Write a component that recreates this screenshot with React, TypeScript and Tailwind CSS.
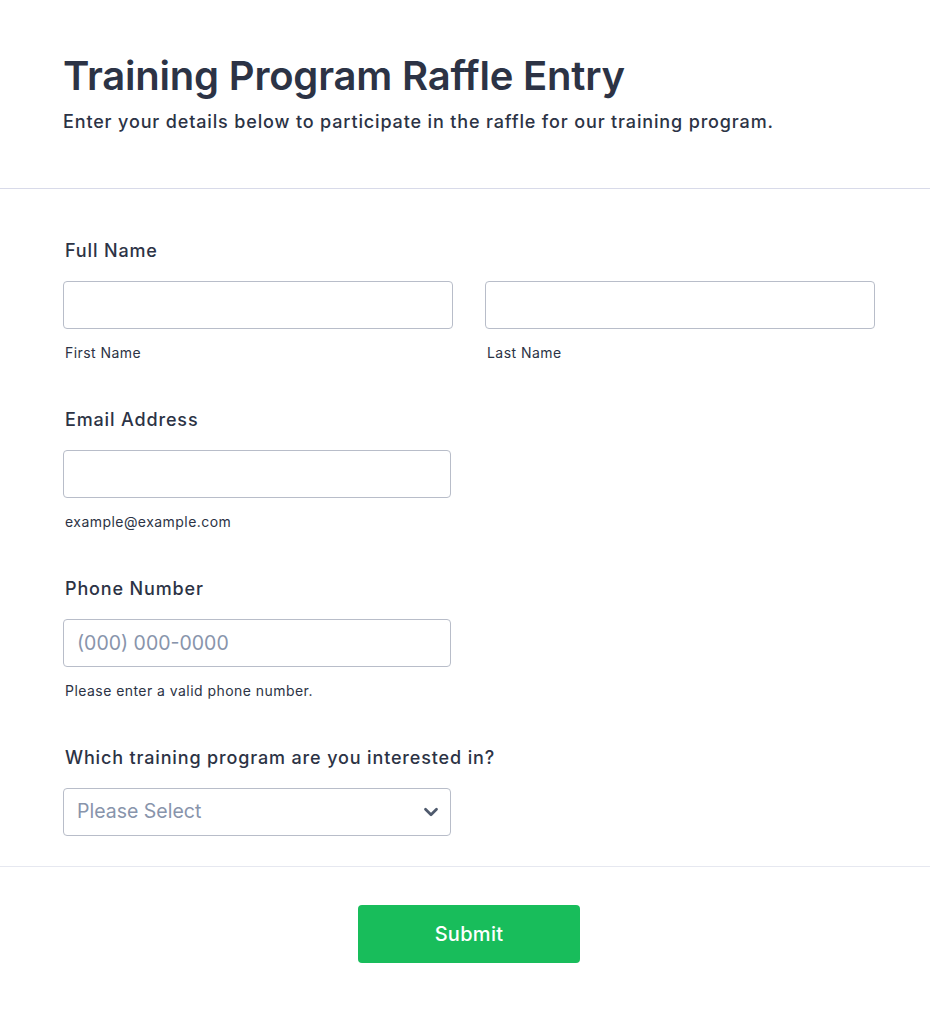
import { ChevronDown } from "lucide-react";

type FieldProps = {
  label: string;
  children: React.ReactNode;
};

const inputClass =
  "h-12 w-full rounded border border-[#b8bdc9] bg-white px-[13px] text-[19.5px] text-[#2c3345] placeholder:text-[#8894ab] outline-none";

const Field = ({ label, children }: FieldProps) => (
  <div className="flex flex-col">
    <label className="ml-[2px] text-lg font-medium leading-6 tracking-[0.85px] text-[#2c3345]">{label}</label>
    <div className="mt-[18px]">{children}</div>
  </div>
);

const Sublabel = ({ text }: { text: string }) => (
  <p className="ml-[2px] mt-[15px] text-sm leading-[18px] tracking-[0.45px] text-[#2c3345]">{text}</p>
);

export default function App() {
  return (
    <div className="min-h-screen bg-white font-['Inter',sans-serif] text-[#2c3345]">
      <header className="border-b border-[#d8dae9] px-[63px] pb-[54px] pt-[52px]">
        <h1 className="text-[40px] font-semibold leading-[48px] tracking-[-0.2px]">Training Program Raffle Entry</h1>
        <p className="mt-[10px] text-lg font-medium leading-6 tracking-[0.85px]">
          Enter your details below to participate in the raffle for our training program.
        </p>
      </header>

      <form className="flex flex-col">
        <div className="flex flex-col gap-[46px] border-b border-[#e6e8f0] px-[63px] pb-[30px] pt-[50px]">
          <Field label="Full Name">
            <div className="grid w-[812px] grid-cols-2 gap-8">
              <div>
                <input className={inputClass} />
                <Sublabel text="First Name" />
              </div>
              <div>
                <input className={inputClass} />
                <Sublabel text="Last Name" />
              </div>
            </div>
          </Field>

          <Field label="Email Address">
            <div className="w-[388px]">
              <input className={inputClass} />
              <Sublabel text="example@example.com" />
            </div>
          </Field>

          <Field label="Phone Number">
            <div className="w-[388px]">
              <input className={inputClass} placeholder="(000) 000-0000" />
              <Sublabel text="Please enter a valid phone number." />
            </div>
          </Field>

          <Field label="Which training program are you interested in?">
            <div className="w-[388px]">
              <div className="flex h-12 w-full items-center justify-between rounded border border-[#b8bdc9] bg-white pl-[13px] pr-[8px] text-[19.5px]">
                <span className="text-[#8894ab]">Please Select</span>
                <ChevronDown size={22} strokeWidth={3} className="text-[#4f5a6d]" />
              </div>
            </div>
          </Field>
        </div>

        <div className="flex justify-center pl-[63px] pr-[55px] pt-[38px]">
          <button
            type="button"
            className="h-[58px] w-[222px] rounded bg-[#18bd5b] text-xl font-medium tracking-[0.3px] text-white"
          >
            Submit
          </button>
        </div>
      </form>
    </div>
  );
}
